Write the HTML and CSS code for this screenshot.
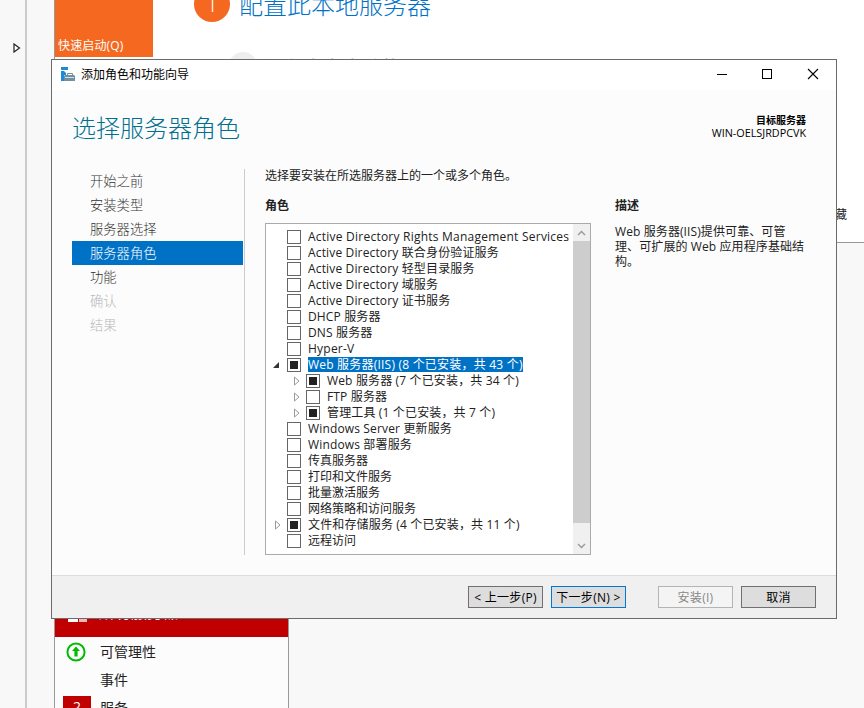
FILE: index.html
```html
<!doctype html>
<html lang="zh-CN">
<head>
    <meta charset="utf-8">
    <title>服务器管理器</title>
    <link rel="stylesheet" href="styles.css">
</head>
<body>
<div class="manager">
    <div class="nav-strip">
        <svg class="nav-arrow" width="8" height="10" viewBox="0 0 8 10"><path d="M1 1L6.5 5L1 9Z" fill="#fff" stroke="#222" stroke-width="1.2"/></svg>
    </div>
    <div class="dashboard">
        <div class="welcome">
            <div class="quick-start">快速启动(Q)</div>
            <div class="steps">
                <div class="step step-main"><span class="num num-main">1</span><span class="step-title">配置此本地服务器</span></div>
                <div class="step step-sub"><span class="num num-sub">2</span><span class="step-link">添加角色和功能</span></div>
            </div>
            <span class="hide-link">隐藏</span>
        </div>
        <div class="tile">
            <div class="tile-head"><span class="tile-icon"><i></i><i class="faded"></i></span><span class="tile-name">所有服务器</span></div>
            <div class="tile-row">
                <svg class="up-icon" width="20" height="20" viewBox="0 0 20 20"><circle cx="10" cy="10" r="8.6" fill="none" stroke="#0b0" stroke-width="2"/><path d="M10 4.5L14 9H11.6V14.5H8.4V9H6Z" fill="#0b0"/></svg>
                <span>可管理性</span>
            </div>
            <div class="tile-row"><span>事件</span></div>
            <div class="tile-row"><b class="count">2</b><span>服务</span></div>
        </div>
    </div>
</div>

<div class="wizard">
    <div class="title-bar">
        <svg class="app-icon" width="14" height="14" viewBox="0 0 14 14">
            <path d="M0 0H7V3H0ZM0 4H3L5 6V8H3V14H0Z" fill="#1f8ad8"/>
            <path d="M6.5 8V6.5H11.5V8" fill="none" stroke="#7290a3"/>
            <path d="M4 8H13L14 9V14H3V9Z" fill="#7290a3"/>
            <path d="M4 10.5H13" stroke="#d5dfe5"/>
        </svg>
        <span class="caption">添加角色和功能向导</span>
        <svg class="win-buttons" width="104" height="12" viewBox="0 0 104 12">
            <path d="M0 6.5H10" stroke="#000"/>
            <rect x="45.5" y="1.5" width="9" height="9" fill="none" stroke="#000"/>
            <path d="M91 1L101 11M101 1L91 11" stroke="#000" stroke-width="1.1"/>
        </svg>
    </div>
    <div class="heading">
        <h1>选择服务器角色</h1>
        <div class="target"><b>目标服务器</b><span class="host">WIN-OELSJRDPCVK</span></div>
    </div>
    <div class="content">
        <ul class="pages">
            <li>开始之前</li>
            <li>安装类型</li>
            <li>服务器选择</li>
            <li class="current">服务器角色</li>
            <li>功能</li>
            <li class="disabled">确认</li>
            <li class="disabled">结果</li>
        </ul>
        <div class="roles">
            <p class="intro">选择要安装在所选服务器上的一个或多个角色。</p>
            <h2>角色</h2>
            <div class="list-box">
                <ul class="tree">
                    <li><i class="exp"></i><i class="box"></i><span class="latin">Active Directory Rights Management Services</span></li>
                    <li><i class="exp"></i><i class="box"></i><span>Active Directory 联合身份验证服务</span></li>
                    <li><i class="exp"></i><i class="box"></i><span>Active Directory 轻型目录服务</span></li>
                    <li><i class="exp"></i><i class="box"></i><span>Active Directory 域服务</span></li>
                    <li><i class="exp"></i><i class="box"></i><span>Active Directory 证书服务</span></li>
                    <li><i class="exp"></i><i class="box"></i><span>DHCP 服务器</span></li>
                    <li><i class="exp"></i><i class="box"></i><span>DNS 服务器</span></li>
                    <li><i class="exp"></i><i class="box"></i><span class="latin">Hyper-V</span></li>
                    <li><i class="exp open"></i><i class="box part"></i><span class="selected">Web 服务器(IIS) (8 个已安装，共 43 个)</span></li>
                    <li class="child"><svg class="exp" viewBox="0 0 16 14"><path d="M4.5 3L9 7L4.5 11Z"/></svg><i class="box part"></i><span>Web 服务器 (7 个已安装，共 34 个)</span></li>
                    <li class="child"><svg class="exp" viewBox="0 0 16 14"><path d="M4.5 3L9 7L4.5 11Z"/></svg><i class="box"></i><span>FTP 服务器</span></li>
                    <li class="child"><svg class="exp" viewBox="0 0 16 14"><path d="M4.5 3L9 7L4.5 11Z"/></svg><i class="box part"></i><span>管理工具 (1 个已安装，共 7 个)</span></li>
                    <li><i class="exp"></i><i class="box"></i><span>Windows Server 更新服务</span></li>
                    <li><i class="exp"></i><i class="box"></i><span>Windows 部署服务</span></li>
                    <li><i class="exp"></i><i class="box"></i><span class="cjk">传真服务器</span></li>
                    <li><i class="exp"></i><i class="box"></i><span class="cjk">打印和文件服务</span></li>
                    <li><i class="exp"></i><i class="box"></i><span class="cjk">批量激活服务</span></li>
                    <li><i class="exp"></i><i class="box"></i><span class="cjk">网络策略和访问服务</span></li>
                    <li><svg class="exp" viewBox="0 0 16 14"><path d="M4.5 3L9 7L4.5 11Z"/></svg><i class="box part"></i><span>文件和存储服务 (4 个已安装，共 11 个)</span></li>
                    <li><i class="exp"></i><i class="box"></i><span class="cjk">远程访问</span></li>
                </ul>
                <div class="scrollbar">
                    <svg width="17" height="17" viewBox="0 0 17 17"><path d="M5 11L8.5 7.5L12 11" fill="none" stroke="#999" stroke-width="1.4"/></svg>
                    <div class="thumb"></div>
                    <svg class="down" width="17" height="17" viewBox="0 0 17 17"><path d="M5 7L8.5 10.5L12 7" fill="none" stroke="#999" stroke-width="1.4"/></svg>
                </div>
            </div>
        </div>
        <div class="description">
            <h2>描述</h2>
            <p>Web 服务器(IIS)提供可靠、可管<br>理、可扩展的 Web 应用程序基础结<br>构。</p>
        </div>
    </div>
    <div class="footer">
        <button class="btn">&lt; 上一步(P)</button>
        <button class="btn default">下一步(N) &gt;</button>
        <button class="btn install" disabled>安装(I)</button>
        <button class="btn">取消</button>
    </div>
</div>
</body>
</html>
```
FILE: styles.css
```css
* {
    box-sizing: border-box;
}
body {
    margin: 0;
    width: 864px;
    height: 708px;
    overflow: hidden;
    position: relative;
    background: #f8f8f8;
    color: #222;
    font: 12px "Open Sans", "Noto Sans CJK SC", sans-serif;
    white-space: nowrap;
}
h1, h2, p, ul {
    margin: 0;
    padding: 0;
    font-weight: normal;
}
ul {
    list-style: none;
}

/* server manager behind the wizard */
.manager {
    display: flex;
    height: 708px;
}
.nav-strip {
    width: 27px;
    padding: 43px 0 0 13px;
    border-right: 2px solid #ccc;
}
.nav-arrow {
    display: block;
}
.dashboard {
    flex: 1;
    padding-left: 27px;
}
.welcome {
    display: flex;
    position: relative;
    height: 243px;
    background: #fff;
    border-left: 1px solid #999;
    border-bottom: 1px solid #999;
}
.quick-start {
    width: 98px;
    height: 57px;
    padding: 37px 0 0 3px;
    background: #f4691f;
    color: #fff;
    letter-spacing: 0.15px;
    line-height: 17px;
}
.steps {
    margin-left: 41px;
}
.step {
    display: flex;
}
.num {
    border-radius: 50%;
    text-align: center;
}
.num-main {
    width: 36px;
    height: 36px;
    margin-top: -14px;
    background: #f4691f;
    color: #fff;
    font: 300 22px/35px "Open Sans", sans-serif;
}
.step-title {
    margin: -13px 0 0 9px;
    color: #0072c6;
    font: 300 24px/34px "Noto Sans CJK SC", sans-serif;
}
.step-sub {
    margin: 30px 0 0 35px;
}
.num-sub {
    width: 28px;
    height: 28px;
    background: #eee;
    color: #333;
    font-size: 16px;
    line-height: 28px;
}
.step-link {
    margin-left: 11px;
    color: #0072c6;
    font: 300 19px/30px "Noto Sans CJK SC", sans-serif;
}
.hide-link {
    position: absolute;
    right: 17px;
    top: 206px;
    line-height: 18px;
}
.tile {
    width: 235px;
    height: 120px;
    margin-top: 355px;
    border: 1px solid #999;
    border-top: 0;
    background: #fcfcfc;
}
.tile-head {
    display: flex;
    height: 39px;
    background: #c00000;
    color: #fff;
}
.tile-icon {
    display: flex;
    gap: 1px;
    margin: 16px 0 0 13px;
}
.tile-icon i {
    width: 10px;
    height: 8px;
    background: #fff;
}
.tile-icon .faded {
    width: 8px;
    background: #f0b8b8;
}
.tile-name {
    margin-left: 12px;
    font-size: 16px;
    line-height: 29px;
}
.tile-row {
    display: flex;
    position: relative;
    height: 28px;
    padding-left: 45px;
    font-size: 14px;
    line-height: 30px;
}
.up-icon {
    position: absolute;
    left: 11px;
    top: 5px;
}
.count {
    position: absolute;
    left: 8px;
    top: 3px;
    width: 28px;
    height: 20px;
    background: #c00000;
    color: #fff;
    font-weight: normal;
    line-height: 21px;
    text-align: center;
}

/* wizard window */
.wizard {
    position: absolute;
    left: 51px;
    top: 59px;
    width: 786px;
    height: 560px;
    display: flex;
    flex-direction: column;
    border: 1px solid #6b6b6b;
    background: #fcfcfc;
}
.title-bar {
    display: flex;
    height: 30px;
    padding: 0 15px 0 9px;
    background: #fff;
    color: #000;
}
.app-icon {
    margin-top: 7px;
}
.caption {
    flex: 1;
    margin-left: 6px;
    line-height: 29px;
}
.win-buttons {
    margin: 8px 0 0;
}
.heading {
    display: flex;
    justify-content: space-between;
    height: 79px;
    padding: 0 30px 0 20px;
}
h1 {
    padding-top: 19px;
    color: #00708f;
    font: 300 24px/36px "Noto Sans CJK SC", sans-serif;
}
.target {
    display: flex;
    flex-direction: column;
    padding-top: 24px;
    color: #000;
    font-size: 10px;
    line-height: 13px;
    text-align: right;
}
.host {
    font-size: 10.8px;
    line-height: 12px;
}
.content {
    display: flex;
    flex: 1;
}
.pages {
    width: 193px;
    height: 386px;
    padding-left: 20px;
    border-right: 1px solid #ccc;
    color: #333;
    font-size: 13.3px;
    font-weight: 300;
    line-height: 25px;
}
.pages li {
    height: 24px;
    margin-right: 1px;
    padding-left: 18px;
}
.pages .current {
    background: #0072c6;
    color: #fff;
}
.pages .disabled {
    color: #b8b8b8;
}
.roles {
    width: 326px;
    margin-left: 20px;
}
.intro {
    line-height: 14px;
}
h2 {
    font-size: 12px;
    font-weight: bold;
    line-height: 18px;
}
.roles h2 {
    margin: 14px 0 8px;
}
.list-box {
    display: flex;
    justify-content: space-between;
    height: 332px;
    border: 1px solid #aaa;
    background: #fff;
}
.tree {
    padding-top: 5px;
}
.tree li {
    display: flex;
    align-items: center;
    height: 16px;
    padding-left: 5px;
}
.tree .child {
    padding-left: 24px;
}
.tree span {
    height: 15px;
    margin-bottom: 2px;
    letter-spacing: 0.15px;
    line-height: 15px;
}
.tree .latin {
    letter-spacing: 0.23px;
}
.tree .cjk {
    letter-spacing: 0;
}
.tree .selected {
    background: #0072c6;
    color: #fff;
    letter-spacing: 0.21px;
}
.exp {
    width: 16px;
    height: 14px;
    fill: #fff;
    stroke: #999;
}
.exp.open {
    background: #333;
    clip-path: polygon(8px 4px, 8px 10px, 2px 10px);
}
.box {
    width: 14px;
    height: 14px;
    margin-right: 7px;
    border: 1px solid #666;
    background: #fff;
}
.box.part {
    padding: 2px;
    background: #222 content-box;
}
.scrollbar {
    display: flex;
    flex-direction: column;
    width: 17px;
    background: #f0f0f0;
}
.thumb {
    height: 282px;
    background: #cdcdcd;
}
.down {
    margin-top: auto;
}
.description {
    margin-left: 24px;
    padding-top: 28px;
}
.description p {
    margin-top: 9px;
    letter-spacing: 0.1px;
    line-height: 15px;
}
.footer {
    display: flex;
    gap: 8px;
    height: 43px;
    padding: 10px 0 0 416px;
    border-top: 1px solid #dcdcdc;
    background: #f0f0f0;
}
.btn {
    width: 75px;
    height: 22px;
    padding: 1px 0 0;
    border: 1px solid #707070;
    background: #ddd;
    color: #000;
    font: inherit;
    letter-spacing: 0.3px;
    line-height: 20px;
}
.btn.default {
    border-color: #0078d7;
}
.btn.install {
    margin-left: 24px;
    border-color: #b4b4b4;
    background: #f4f4f4;
    color: #888;
}
```
